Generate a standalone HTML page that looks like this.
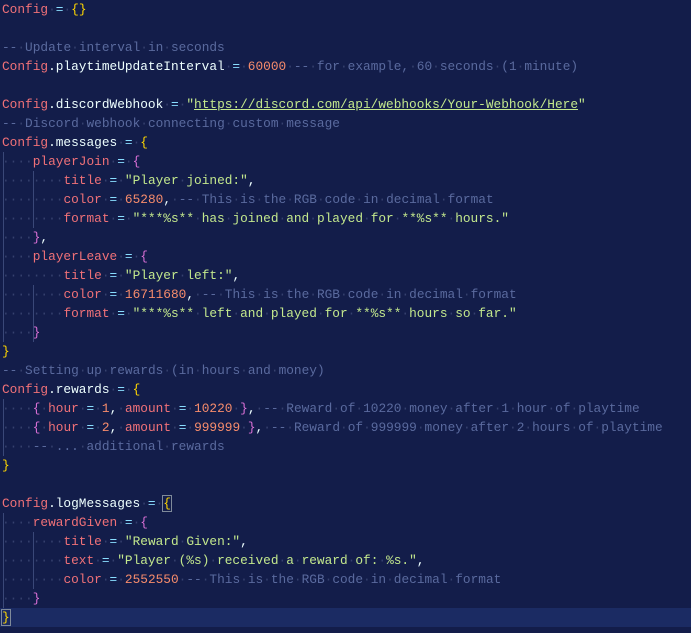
<!DOCTYPE html>
<html><head><meta charset="utf-8"><style>
html,body{margin:0;padding:0;background:#131d4a;width:691px;height:633px;overflow:hidden}
.code{margin:0;padding:0 0 0 2px;font-family:"Liberation Mono",monospace;font-size:12.8px;line-height:19px;color:#eeffff;position:relative;top:0}
.l{height:19px;white-space:pre;position:relative}
.cur{background:#1b2b63;margin-left:-2px;padding-left:2px}
i{font-style:normal;color:#36416e}
.k{color:#f07178}.o{color:#89ddff}.n{color:#f78c6c}.s{color:#c3e88d}.c{color:#5a6a9e}
.y{color:#ffd700}.m{color:#da70d6}
.u{text-decoration:underline}
.box{outline:1px solid #7f8a9a}
.g{position:absolute;width:1px;background:#3a4878;z-index:2}
</style></head><body>
<div class="g" style="left:3px;top:152px;height:190px"></div>
<div class="g" style="left:33px;top:171px;height:57px"></div>
<div class="g" style="left:33px;top:285px;height:57px"></div>
<div class="g" style="left:3px;top:399px;height:57px"></div>
<div class="g" style="left:3px;top:513px;height:95px"></div>
<div class="g" style="left:33px;top:532px;height:57px"></div>
<div class="code"><div class="l"><span class="k">Config</span><i>·</i><span class="o">=</span><i>·</i><span class="y">{}</span></div><div class="l"></div><div class="l c">--<i>·</i>Update<i>·</i>interval<i>·</i>in<i>·</i>seconds</div><div class="l"><span class="k">Config</span>.playtimeUpdateInterval<i>·</i><span class="o">=</span><i>·</i><span class="n">60000</span><i>·</i><span class="c">--<i>·</i>for<i>·</i>example,<i>·</i>60<i>·</i>seconds<i>·</i>(1<i>·</i>minute)</span></div><div class="l"></div><div class="l"><span class="k">Config</span>.discordWebhook<i>·</i><span class="o">=</span><i>·</i><span class="s">"<span class="u">https://discord.com/api/webhooks/Your-Webhook/Here</span>"</span></div><div class="l c">--<i>·</i>Discord<i>·</i>webhook<i>·</i>connecting<i>·</i>custom<i>·</i>message</div><div class="l"><span class="k">Config</span>.messages<i>·</i><span class="o">=</span><i>·</i><span class="y">{</span></div><div class="l"><i>····</i><span class="k">playerJoin</span><i>·</i><span class="o">=</span><i>·</i><span class="m">{</span></div><div class="l"><i>········</i><span class="k">title</span><i>·</i><span class="o">=</span><i>·</i><span class="s">"Player<i>·</i>joined:"</span>,</div><div class="l"><i>········</i><span class="k">color</span><i>·</i><span class="o">=</span><i>·</i><span class="n">65280</span>,<i>·</i><span class="c">--<i>·</i>This<i>·</i>is<i>·</i>the<i>·</i>RGB<i>·</i>code<i>·</i>in<i>·</i>decimal<i>·</i>format</span></div><div class="l"><i>········</i><span class="k">format</span><i>·</i><span class="o">=</span><i>·</i><span class="s">"***%s**<i>·</i>has<i>·</i>joined<i>·</i>and<i>·</i>played<i>·</i>for<i>·</i>**%s**<i>·</i>hours."</span></div><div class="l"><i>····</i><span class="m">}</span>,</div><div class="l"><i>····</i><span class="k">playerLeave</span><i>·</i><span class="o">=</span><i>·</i><span class="m">{</span></div><div class="l"><i>········</i><span class="k">title</span><i>·</i><span class="o">=</span><i>·</i><span class="s">"Player<i>·</i>left:"</span>,</div><div class="l"><i>········</i><span class="k">color</span><i>·</i><span class="o">=</span><i>·</i><span class="n">16711680</span>,<i>·</i><span class="c">--<i>·</i>This<i>·</i>is<i>·</i>the<i>·</i>RGB<i>·</i>code<i>·</i>in<i>·</i>decimal<i>·</i>format</span></div><div class="l"><i>········</i><span class="k">format</span><i>·</i><span class="o">=</span><i>·</i><span class="s">"***%s**<i>·</i>left<i>·</i>and<i>·</i>played<i>·</i>for<i>·</i>**%s**<i>·</i>hours<i>·</i>so<i>·</i>far."</span></div><div class="l"><i>····</i><span class="m">}</span></div><div class="l"><span class="y">}</span></div><div class="l c">--<i>·</i>Setting<i>·</i>up<i>·</i>rewards<i>·</i>(in<i>·</i>hours<i>·</i>and<i>·</i>money)</div><div class="l"><span class="k">Config</span>.rewards<i>·</i><span class="o">=</span><i>·</i><span class="y">{</span></div><div class="l"><i>····</i><span class="m">{</span><i>·</i><span class="k">hour</span><i>·</i><span class="o">=</span><i>·</i><span class="n">1</span>,<i>·</i><span class="k">amount</span><i>·</i><span class="o">=</span><i>·</i><span class="n">10220</span><i>·</i><span class="m">}</span>,<i>·</i><span class="c">--<i>·</i>Reward<i>·</i>of<i>·</i>10220<i>·</i>money<i>·</i>after<i>·</i>1<i>·</i>hour<i>·</i>of<i>·</i>playtime</span></div><div class="l"><i>····</i><span class="m">{</span><i>·</i><span class="k">hour</span><i>·</i><span class="o">=</span><i>·</i><span class="n">2</span>,<i>·</i><span class="k">amount</span><i>·</i><span class="o">=</span><i>·</i><span class="n">999999</span><i>·</i><span class="m">}</span>,<i>·</i><span class="c">--<i>·</i>Reward<i>·</i>of<i>·</i>999999<i>·</i>money<i>·</i>after<i>·</i>2<i>·</i>hours<i>·</i>of<i>·</i>playtime</span></div><div class="l"><i>····</i><span class="c">--<i>·</i>...<i>·</i>additional<i>·</i>rewards</span></div><div class="l"><span class="y">}</span></div><div class="l"></div><div class="l"><span class="k">Config</span>.logMessages<i>·</i><span class="o">=</span><i>·</i><span class="y box">{</span></div><div class="l"><i>····</i><span class="k">rewardGiven</span><i>·</i><span class="o">=</span><i>·</i><span class="m">{</span></div><div class="l"><i>········</i><span class="k">title</span><i>·</i><span class="o">=</span><i>·</i><span class="s">"Reward<i>·</i>Given:"</span>,</div><div class="l"><i>········</i><span class="k">text</span><i>·</i><span class="o">=</span><i>·</i><span class="s">"Player<i>·</i>(%s)<i>·</i>received<i>·</i>a<i>·</i>reward<i>·</i>of:<i>·</i>%s."</span>,</div><div class="l"><i>········</i><span class="k">color</span><i>·</i><span class="o">=</span><i>·</i><span class="n">2552550</span><i>·</i><span class="c">--<i>·</i>This<i>·</i>is<i>·</i>the<i>·</i>RGB<i>·</i>code<i>·</i>in<i>·</i>decimal<i>·</i>format</span></div><div class="l"><i>····</i><span class="m">}</span></div><div class="l cur"><span class="y box">}</span></div></div>
</body></html>
